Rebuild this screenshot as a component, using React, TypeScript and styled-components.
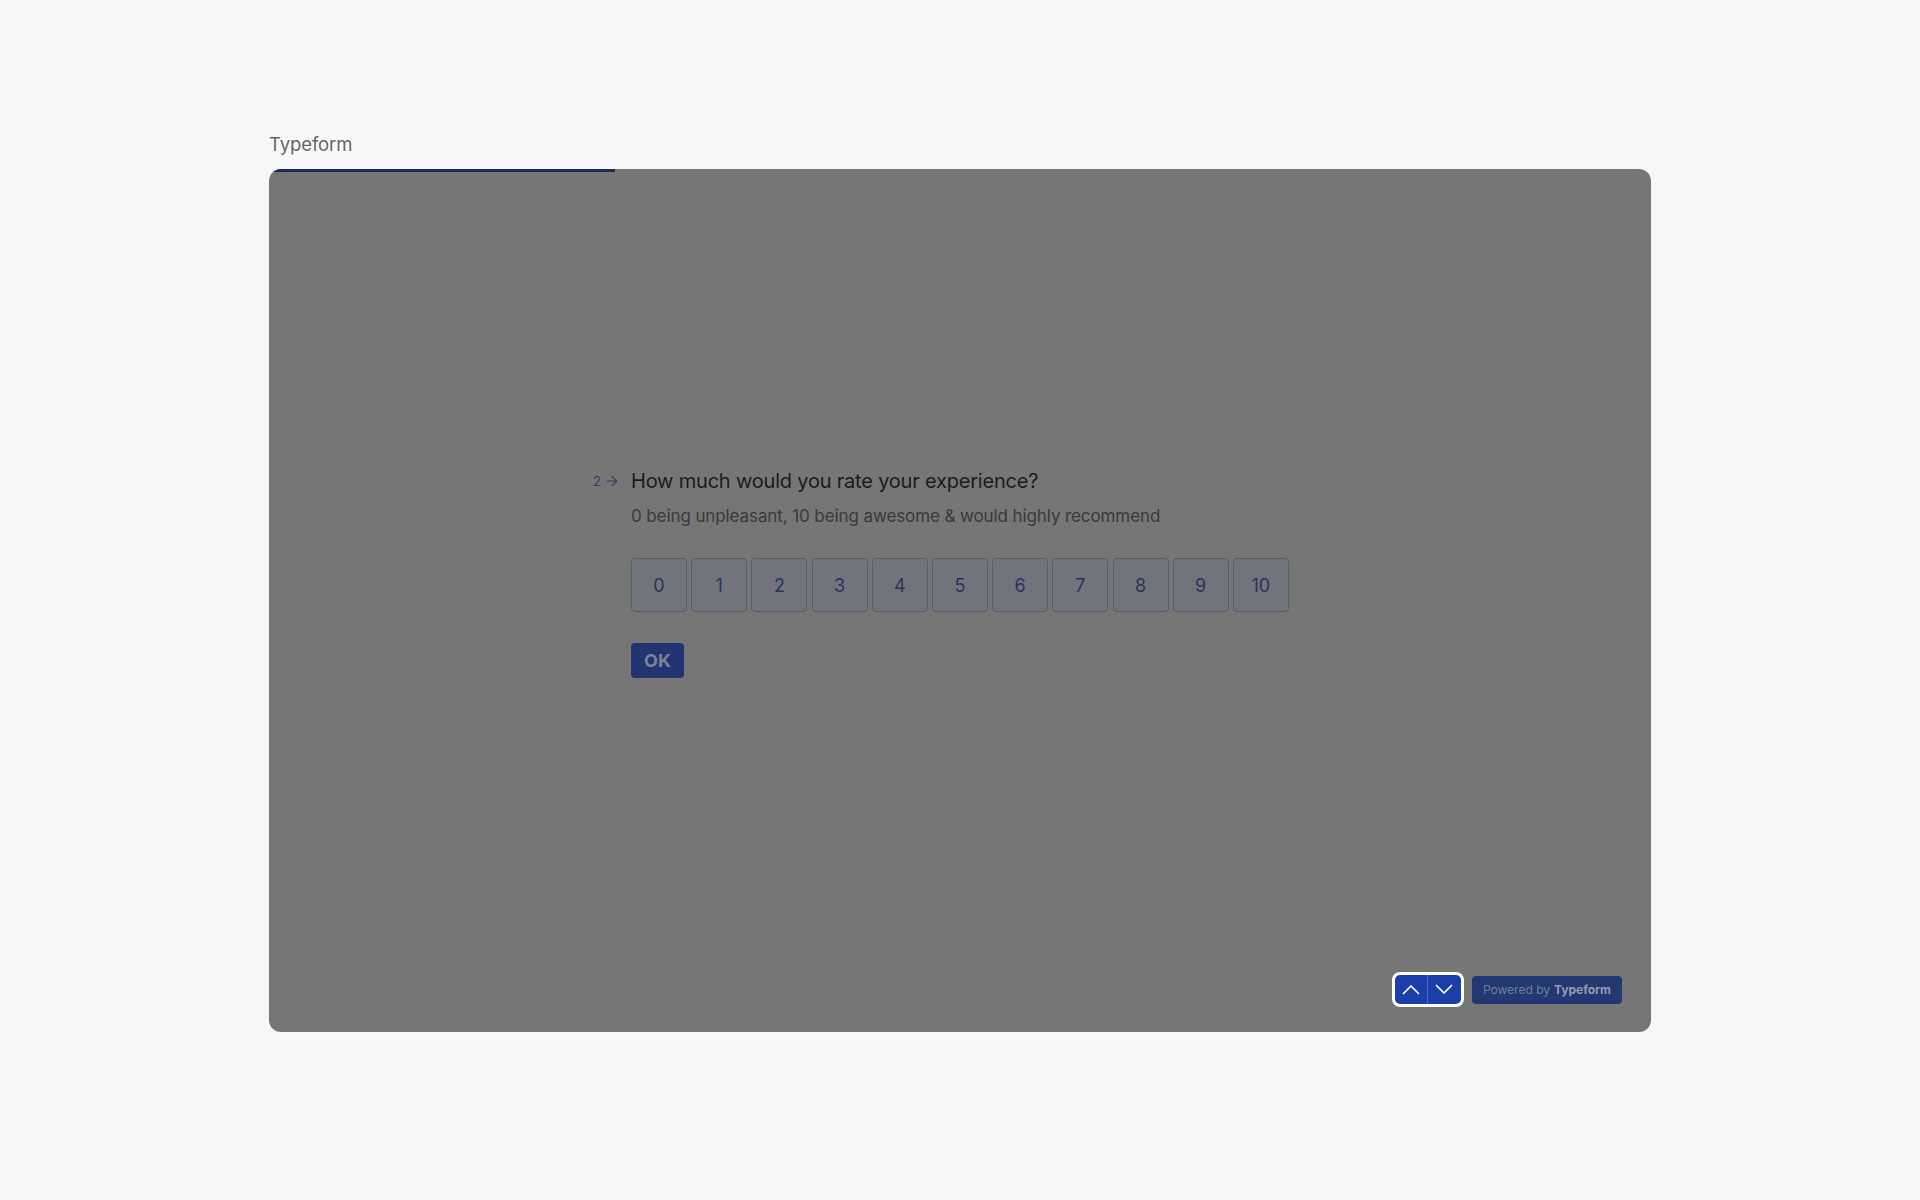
import styled, { createGlobalStyle } from "styled-components";
import { ArrowRight } from "lucide-react";

const GlobalStyle = createGlobalStyle`
  html, body {
    margin: 0;
    padding: 0;
    background: #f7f7f7;
    font-family: Inter, "Noto Sans", "Liberation Sans", sans-serif;
  }
`;

const Page = styled.div`
  padding: 132px 0 0 269px;
  width: 1382px;
`;

const Label = styled.div`
  font-size: 18.5px;
  line-height: 24px;
  color: #666666;
  margin-bottom: 13px;
  letter-spacing: -0.1px;
`;

const Frame = styled.div`
  position: relative;
  height: 863px;
  border-radius: 12px;
  background: #767676;
  overflow: hidden;
`;

const Progress = styled.div<{ value: number }>`
  height: 3px;
  width: ${(p) => p.value}%;
  background: #1f2d55;
`;

const Content = styled.div`
  padding: 294px 0 0 362px;
`;

const Question = styled.div`
  display: flex;
  align-items: center;
  margin-left: -38px;
`;

const Num = styled.span`
  display: flex;
  align-items: center;
  gap: 3px;
  width: 38px;
  font-size: 13px;
  color: #2f3b6b;
`;

const Title = styled.h1`
  margin: 0;
  font-size: 20px;
  line-height: 30px;
  font-weight: 400;
  color: #1c1c1c;
  letter-spacing: -0.2px;
`;

const Subtitle = styled.p`
  margin: 8px 0 0;
  font-size: 17px;
  line-height: 24px;
  color: #3a3a3a;
  letter-spacing: -0.1px;
`;

const Scale = styled.div`
  display: flex;
  gap: 4.2px;
  margin-top: 30px;
`;

const ScaleButton = styled.button`
  width: 56px;
  height: 54px;
  border: 1px solid #5a5e6c;
  border-radius: 4px;
  background: #72747c;
  font-family: inherit;
  font-size: 18px;
  color: #2a335e;
  padding: 0;
`;

const OkButton = styled.button`
  margin-top: 31px;
  width: 53px;
  height: 35px;
  border: none;
  border-radius: 4px;
  background: #223471;
  color: #7c8296;
  font-family: inherit;
  font-weight: 700;
  font-size: 18px;
  padding: 0;
`;

const Footer = styled.div`
  position: absolute;
  right: 29px;
  bottom: 25px;
  display: flex;
  align-items: center;
  gap: 8px;
`;

const NavGroup = styled.div`
  display: flex;
  border: 3px solid #ffffff;
  border-radius: 8px;
  background: #1b3ea9;
  overflow: hidden;
`;

const NavButton = styled.button<{ divider?: boolean }>`
  width: 33px;
  height: 29px;
  display: flex;
  align-items: center;
  justify-content: center;
  border: none;
  border-right: ${(p) => (p.divider ? "1px solid #4a68c4" : "none")};
  background: transparent;
  color: #ffffff;
  padding: 0;
`;

const Powered = styled.div`
  height: 28px;
  padding: 0 11px;
  display: flex;
  align-items: center;
  border-radius: 4px;
  background: #233871;
  font-size: 12px;
  color: #737c99;

  b {
    margin-left: 4px;
    color: #959bb0;
    font-weight: 700;
  }
`;

const Chevron = ({ up }: { up?: boolean }) => (
  <svg width="18" height="11" viewBox="0 0 18 11" fill="none">
    <polyline
      points={up ? "1.5,9.5 9,2 16.5,9.5" : "1.5,1.5 9,9 16.5,1.5"}
      stroke="currentColor"
      strokeWidth="1.7"
      strokeLinecap="round"
      strokeLinejoin="round"
    />
  </svg>
);

const App = () => {
  const values = Array.from({ length: 11 }, (_, i) => i);
  return (
    <>
      <GlobalStyle />
      <Page>
        <Label>Typeform</Label>
        <Frame>
          <Progress value={25} />
          <Content>
            <Question>
              <Num>
                2 <ArrowRight size={16} strokeWidth={1.6} />
              </Num>
              <Title>How much would you rate your experience?</Title>
            </Question>
            <Subtitle>
              0 being unpleasant, 10 being awesome &amp; would highly recommend
            </Subtitle>
            <Scale>
              {values.map((v) => (
                <ScaleButton key={v}>{v}</ScaleButton>
              ))}
            </Scale>
            <OkButton>OK</OkButton>
          </Content>
          <Footer>
            <NavGroup>
              <NavButton divider>
                <Chevron up />
              </NavButton>
              <NavButton>
                <Chevron />
              </NavButton>
            </NavGroup>
            <Powered>
              Powered by<b>Typeform</b>
            </Powered>
          </Footer>
        </Frame>
      </Page>
    </>
  );
};

export default App;
